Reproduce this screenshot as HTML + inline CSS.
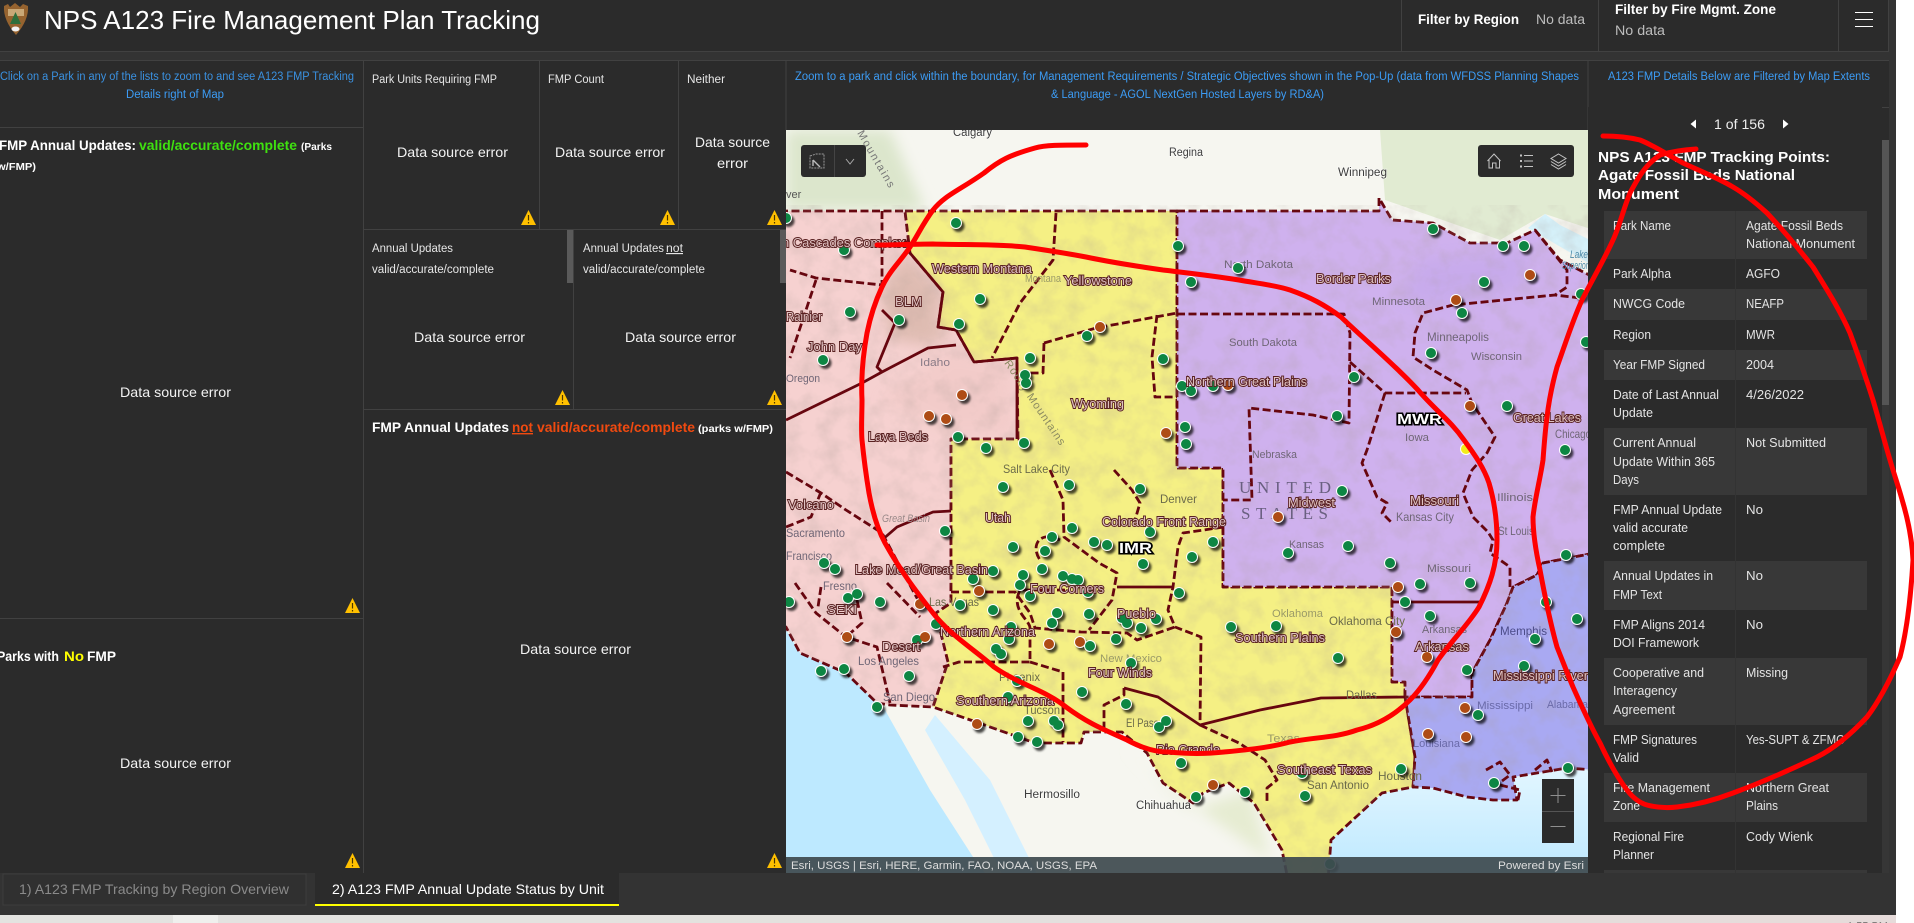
<!DOCTYPE html>
<html lang="en"><head><meta charset="utf-8"><title>NPS A123 Fire Management Plan Tracking</title>
<style>
html,body{margin:0;padding:0;background:#fff;width:1914px;height:923px;overflow:hidden}
svg{display:block}
text{font-family:"Liberation Sans",sans-serif}
.w{fill:#f2f2f2;font-size:14px}
.l{fill:#e6e6e6;font-size:11.5px}
.bl{fill:#3c9cf5;font-size:11.5px}
.t{fill:#e4e4e4;font-size:12.5px}
.h{fill:#fff;font-size:14px;font-weight:bold}
.r{font-size:13px;fill:#dfc2c2;stroke:#5a2222;stroke-width:1.9;paint-order:stroke}
.b{font-size:11px;fill:#6f6676}
.k{font-size:11.5px;fill:#3d3d3d;stroke:#fff;stroke-opacity:.5;stroke-width:1.5;paint-order:stroke}
.R{font-size:15px;font-weight:bold;fill:#fff;stroke:#000;stroke-width:3;paint-order:stroke}
</style></head><body>
<svg width="1914" height="923" viewBox="0 0 1914 923" xmlns="http://www.w3.org/2000/svg">
<defs>
<clipPath id="mc"><rect x="786" y="130" width="802" height="743"/></clipPath>
<clipPath id="land"><path d="M780 205H1595V770L1567 768L1513 777L1517 800L1433 788L1413 787L1382 793L1331 840L1328 880H1288L1282 850L1254 803L1229 783L1203 793L1193 803L1163 783L1147 753L1122 732H1084L1081 743H1035L979 723L933 707L877 703L846 673L800 653L786 627H780Z"/></clipPath>
<linearGradient id="gulf" x1="0" y1="0" x2="0" y2="1"><stop offset="0" stop-color="#e2f6ff"/><stop offset="1" stop-color="#bce8ff"/></linearGradient>
<linearGradient id="task" x1="0" y1="0" x2="1" y2="0"><stop offset="0" stop-color="#e3e3e0"/><stop offset=".5" stop-color="#e3e1de"/><stop offset="1" stop-color="#e6dbda"/></linearGradient>
<filter id="bl"><feGaussianBlur stdDeviation="1"/></filter>
<filter id="bl6" x="-30%" y="-30%" width="160%" height="160%"><feGaussianBlur stdDeviation="7"/></filter>
<filter id="ter" x="0" y="0" width="1" height="1"><feTurbulence type="fractalNoise" baseFrequency=".05" numOctaves="4" seed="7"/><feColorMatrix values="0 0 0 0 .4  0 0 0 0 .33  0 0 0 0 .3  .5 0 0 0 -.2"/></filter>
<g id="warn"><path d="M7.5 0 L15 15 H0 Z" fill="#ffc000"/><path d="M7.5 5v5.5M7.5 12v1.5" stroke="#4a3500" stroke-width="1.2"/></g>
<path id="dg" d="M956 223h.01M844 250h.01M1178 246h.01M786 218h.01M1238 268h.01M1191 282h.01M1433 229h.01M1503 246h.01M1524 246h.01M1484 282h.01M980 299h.01M850 312h.01M899 320h.01M959 324h.01M1087 336h.01M1462 313h.01M1431 353h.01M823 360h.01M1030 358h.01M1163 359h.01M1025 375h.01M1026 383h.01M1354 377h.01M1182 386h.01M1191 391h.01M1213 386h.01M1337 416h.01M1507 406h.01M1185 427h.01M958 437h.01M1024 443h.01M1186 444h.01M986 448h.01M1581 294h.01M1586 342h.01M1565 450h.01M1003 487h.01M1069 485h.01M1140 489h.01M1342 491h.01M945 531h.01M1072 528h.01M1150 532h.01M1052 537h.01M1094 542h.01M1107 545h.01M1013 547h.01M1045 551h.01M1213 542h.01M1192 557h.01M1288 553h.01M1348 546h.01M1566 555h.01M1143 564h.01M1390 563h.01M824 563h.01M835 569h.01M993 571h.01M1042 569h.01M973 579h.01M1023 575h.01M1063 576h.01M1072 579h.01M1078 580h.01M1020 585h.01M1420 584h.01M1470 583h.01M1179 593h.01M857 594h.01M848 598h.01M1030 596h.01M1088 592h.01M880 602h.01M789 602h.01M960 605h.01M1405 602h.01M1546 602h.01M993 610h.01M1057 613h.01M1089 614h.01M1122 618h.01M1127 623h.01M1156 619h.01M1430 616h.01M1052 623h.01M1577 619h.01M1231 627h.01M1276 626h.01M1141 628h.01M936 624h.01M1011 627h.01M1535 639h.01M1009 639h.01M1116 639h.01M1090 646h.01M917 640h.01M996 649h.01M1001 654h.01M1338 658h.01M1131 663h.01M844 669h.01M821 671h.01M1467 670h.01M1524 666h.01M909 676h.01M1017 681h.01M1082 692h.01M1008 697h.01M1126 704h.01M877 707h.01M1478 715h.01M1028 721h.01M1054 721h.01M1058 725h.01M1166 721h.01M1159 727h.01M1018 737h.01M1037 742h.01M1181 763h.01M1401 769h.01M1302 773h.01M1568 768h.01M1494 783h.01M1245 792h.01M1196 797h.01M1305 796h.01M1330 864h.01"/>
<path id="do" d="M1100 327h.01M1530 275h.01M1456 300h.01M962 395h.01M929 416h.01M946 419h.01M1166 433h.01M1228 385h.01M1470 406h.01M1278 517h.01M979 591h.01M1398 587h.01M920 604h.01M847 637h.01M1396 632h.01M925 637h.01M1049 644h.01M1080 642h.01M1427 657h.01M1465 708h.01M1428 734h.01M1466 737h.01M977 724h.01M1213 785h.01"/>
<path id="dy" d="M1466 449h.01"/>
</defs>
<rect width="1896" height="923" fill="#2b2b2b"/>
<rect y="51" width="1896" height="9" fill="#333"/>
<path d="M0 51.5H1889M0 60.5H1889" stroke="#414141"/>
<rect x="1889" width="7" height="915" fill="#333"/>
<rect y="873" width="1896" height="42" fill="#333"/>
<rect y="915" width="1896" height="8" fill="url(#task)"/>
<rect x="173" y="915" width="45" height="8" fill="#efefed"/>
<text x="1847" y="930" font-size="11" fill="#222">1:55 PM</text>

<!-- header -->
<path d="M4 6 L8 4 L10 7 L15 3 L20 7 L23 4 L28 6 Q29 20 16 35 Q3 20 4 6Z" fill="#96632f"/>
<path d="M8 9 H24 V16 H8Z" fill="#c9a877"/>
<path d="M15.5 12 L21 24 H10Z" fill="#2f6f3c"/>
<ellipse cx="15.5" cy="29" rx="4" ry="2.5" fill="#f2f2f2"/>
<text x="44" y="29" font-size="26" fill="#fff" textLength="496" lengthAdjust="spacingAndGlyphs">NPS A123 Fire Management Plan Tracking</text>
<path d="M1401.5 0V51M1598.5 0V51M1838.5 0V51M1888.5 0V51" stroke="#414141"/>
<text x="1418" y="24" class="h" font-size="13.5" textLength="101" lengthAdjust="spacingAndGlyphs">Filter by Region</text>
<text x="1536" y="24" font-size="13.5" fill="#bdbdbd" textLength="49" lengthAdjust="spacingAndGlyphs">No data</text>
<text x="1615" y="14" class="h" textLength="161" lengthAdjust="spacingAndGlyphs">Filter by Fire Mgmt. Zone</text>
<text x="1615" y="35" font-size="13.5" fill="#bdbdbd" textLength="50" lengthAdjust="spacingAndGlyphs">No data</text>
<path d="M1855 12.5H1873M1855 19.5H1873M1855 26.5H1873" stroke="#fff" stroke-width="1"/>

<!-- panel lines -->
<path d="M363.5 60V873M786 60V130M0 127.5H363M0 618.5H363M363 229.5H786M363 409.5H786M539.5 60V229M678.5 60V229M573.5 229V409M1588 60V130M1588 107.5H1889" stroke="#414141"/>

<!-- left -->
<text x="0" y="80" class="bl" fill-opacity=".9" textLength="354" lengthAdjust="spacingAndGlyphs">Click on a Park in any of the lists to zoom to and see A123 FMP Tracking</text>
<text x="126" y="98" class="bl" textLength="98" lengthAdjust="spacingAndGlyphs">Details right of Map</text>
<text x="-1" y="150" class="h" textLength="137" lengthAdjust="spacingAndGlyphs">FMP Annual Updates:</text>
<text x="139" y="150" font-size="14" font-weight="bold" fill="#3fe010" textLength="158" lengthAdjust="spacingAndGlyphs">valid/accurate/complete</text>
<text x="301" y="150" font-size="10.5" font-weight="bold" fill="#fff" textLength="31" lengthAdjust="spacingAndGlyphs">(Parks</text>
<text x="-3" y="170" font-size="10.5" font-weight="bold" fill="#fff" textLength="39" lengthAdjust="spacingAndGlyphs">w/FMP)</text>
<text x="120" y="397" class="w" textLength="111" lengthAdjust="spacingAndGlyphs">Data source error</text>
<use href="#warn" x="345" y="598"/>
<text x="-3" y="661" class="h" textLength="62" lengthAdjust="spacingAndGlyphs">Parks with</text>
<text x="64" y="661" font-size="14" font-weight="bold" fill="#ffff00" textLength="20" lengthAdjust="spacingAndGlyphs">No</text>
<text x="87" y="661" class="h" textLength="29" lengthAdjust="spacingAndGlyphs">FMP</text>
<text x="120" y="768" class="w" textLength="111" lengthAdjust="spacingAndGlyphs">Data source error</text>
<use href="#warn" x="345" y="853"/>

<!-- counts -->
<text x="372" y="83" class="l" textLength="125" lengthAdjust="spacingAndGlyphs">Park Units Requiring FMP</text>
<text x="548" y="83" class="l" textLength="56" lengthAdjust="spacingAndGlyphs">FMP Count</text>
<text x="687" y="83" class="l" textLength="38" lengthAdjust="spacingAndGlyphs">Neither</text>
<text x="397" y="157" class="w" textLength="111" lengthAdjust="spacingAndGlyphs">Data source error</text>
<text x="555" y="157" class="w" textLength="110" lengthAdjust="spacingAndGlyphs">Data source error</text>
<text x="695" y="147" class="w" textLength="75" lengthAdjust="spacingAndGlyphs">Data source</text>
<text x="717" y="168" class="w" textLength="31" lengthAdjust="spacingAndGlyphs">error</text>
<use href="#warn" x="521" y="210"/><use href="#warn" x="660" y="210"/><use href="#warn" x="767" y="210"/>

<text x="372" y="252" class="l" textLength="81" lengthAdjust="spacingAndGlyphs">Annual Updates</text>
<text x="372" y="273" class="l" textLength="122" lengthAdjust="spacingAndGlyphs">valid/accurate/complete</text>
<text x="583" y="252" class="l" textLength="81" lengthAdjust="spacingAndGlyphs">Annual Updates</text>
<text x="666" y="252" class="l" text-decoration="underline" textLength="17" lengthAdjust="spacingAndGlyphs">not</text>
<text x="583" y="273" class="l" textLength="122" lengthAdjust="spacingAndGlyphs">valid/accurate/complete</text>
<rect x="567" y="230" width="6" height="53" fill="#5a5a5a"/><rect x="780" y="230" width="6" height="53" fill="#5a5a5a"/>
<text x="414" y="342" class="w" textLength="111" lengthAdjust="spacingAndGlyphs">Data source error</text>
<text x="625" y="342" class="w" textLength="111" lengthAdjust="spacingAndGlyphs">Data source error</text>
<use href="#warn" x="555" y="390"/><use href="#warn" x="767" y="390"/>

<text x="372" y="432" class="h" textLength="137" lengthAdjust="spacingAndGlyphs">FMP Annual Updates</text>
<text x="512" y="432" font-size="14" font-weight="bold" fill="#f04a10" text-decoration="underline" textLength="21" lengthAdjust="spacingAndGlyphs">not</text>
<text x="537" y="432" font-size="14" font-weight="bold" fill="#f04a10" textLength="158" lengthAdjust="spacingAndGlyphs">valid/accurate/complete</text>
<text x="698" y="432" font-size="10.5" font-weight="bold" fill="#fff" textLength="75" lengthAdjust="spacingAndGlyphs">(parks w/FMP)</text>
<text x="520" y="654" class="w" textLength="111" lengthAdjust="spacingAndGlyphs">Data source error</text>
<use href="#warn" x="767" y="853"/>

<!-- map headers -->
<text x="795" y="80" class="bl" textLength="784" lengthAdjust="spacingAndGlyphs">Zoom to a park and click within the boundary, for Management Requirements / Strategic Objectives shown in the Pop-Up (data from WFDSS Planning Shapes</text>
<text x="1051" y="98" class="bl" textLength="273" lengthAdjust="spacingAndGlyphs">&amp; Language - AGOL NextGen Hosted Layers by RD&amp;A)</text>
<text x="1608" y="80" class="bl" textLength="262" lengthAdjust="spacingAndGlyphs">A123 FMP Details Below are Filtered by Map Extents</text>

<!-- MAP -->
<g clip-path="url(#mc)">
<rect x="786" y="130" width="802" height="743" fill="#f6f6f0"/>
<path d="M786 130H890L925 210H786Z" fill="#dce6cc" filter="url(#bl6)"/>
<path d="M1380 130H1600V232L1545 214L1500 240L1385 200Z" fill="#e1ebd2"/>
<path d="M1528 228L1545 214L1560 225L1590 240V264Z" fill="#d6f2fb"/>
<path d="M780 620L800 653L846 673L877 703L885 710L930 790L975 860L990 880H780Z" fill="#bde9ff"/>
<path d="M935 715L990 780L1040 880H1005L965 800L925 730Z" fill="#d4f0ff"/>
<path d="M1120 745L1200 810L1270 860L1250 790L1190 810L1150 770Z" fill="#e6ecd2" filter="url(#bl6)"/>
<path d="M1288 880H1328L1331 840L1382 793L1413 787L1433 788L1467 797L1517 800L1513 777L1567 768L1595 770V880Z" fill="url(#gulf)"/>
<g stroke="#67060f" stroke-width="2.8" stroke-linejoin="round">
<path d="M780 211H905L910 253L943 292L938 327L956 330L974 362L1017 358L1018 439H951V603L936 613L948 662L933 707L890 705L877 703L846 673L800 653L786 627H780Z" fill="#f6d1d0" stroke-dasharray="8 3.5"/>
<path d="M905 211H1177V468H1223V587H1392V682H1405V697L1415 757L1413 787L1382 793L1331 840L1328 880H1288L1282 850L1254 803L1229 783L1203 793L1193 803L1163 783L1147 753L1122 732H1084L1081 743H1035L979 723L933 707L948 662L936 613L951 603V439H1018L1017 358L974 362L956 330L938 327L943 292L910 253Z" fill="#f5f084" stroke-dasharray="8 3.5"/>
<path d="M1177 211H1379V198L1392 220L1433 223L1470 243L1507 243L1535 230L1560 260L1595 278V553L1543 563L1537 575L1513 587L1507 603L1490 640L1472 673V697H1405V682H1392V587H1223V468H1177Z" fill="#cfb1ee" stroke-dasharray="8 3.5"/>
<path d="M1595 553L1543 563L1537 575L1513 587L1507 603L1490 640L1472 673V697H1405L1415 757L1413 787L1433 788L1467 797L1493 800L1517 800L1513 777L1567 768L1595 770Z" fill="#a9a9f2" stroke-dasharray="8 3.5"/>
</g>
<path d="M1420 260L1530 250L1520 290L1440 305L1400 300Z" fill="#bda2e8" opacity=".4" filter="url(#bl6)"/>
<path d="M905 253L943 292L938 327L956 330L930 345L890 340L880 290Z" fill="#cfae9e" opacity=".6" filter="url(#bl6)"/>
<path d="M880 400L950 350L1010 360L1015 435H950Z" fill="#e8bdb8" opacity=".25" filter="url(#bl6)"/>
<g clip-path="url(#land)"><rect x="786" y="205" width="802" height="670" filter="url(#ter)"/></g>
<!-- boundaries -->
<g fill="none" stroke="#67060f" stroke-width="2.8" stroke-dasharray="8 3.5" stroke-linejoin="round">
<path d="M1056 213L1053 260L1020 303L992 358"/>
<path d="M882 211V285L816 278L790 270M816 280L790 358"/>
<path d="M1044 343L1096 328L1177 313M1157 315L1152 357L1155 397H1177M1044 343L1043 373H1030"/>
<path d="M1177 314H1344L1350 333L1349 423L1313 415L1249 408L1252 500H1223"/>
<path d="M1350 362L1385 393H1466M1385 393L1367 450L1362 463L1377 497L1387 503L1382 513L1392 523"/>
<path d="M1580 298L1555 295L1453 305L1423 313L1415 333L1413 357L1433 370L1467 390L1472 403L1495 437L1487 453L1472 470L1463 493L1473 517L1488 532L1493 540L1490 553L1510 567V587"/>
<path d="M1535 230L1567 270V287L1555 295"/>
<path d="M1050 470L1063 500L1064 537L1099 563L1117 573L1112 600L1089 630M1114 470L1132 490L1140 503L1135 520"/>
<path d="M1224 527L1183 533L1178 547L1173 587L1168 610L1175 627L1201 637L1200 725"/>
<path d="M951 592H1015L1030 613L1035 628L1081 632L1127 633L1137 640L1175 627"/>
<path d="M1030 628V662H959L943 667M1030 662L1063 672V742"/>
<path d="M1124 688V695L1104 705V730M1200 725L1239 743L1265 760L1277 780L1267 788V803"/>
<path d="M786 472L821 493L846 510L882 533L918 600L938 617M795 583L816 613L846 637L877 647L890 703M857 600L862 623L846 637M821 587L818 607M887 583L920 617M786 527L811 517L821 492"/>
<path d="M1060 540C1040 530 1030 545 1040 560"/>
<path d="M1065 590L1020 590C1010 610 1030 620 1030 628"/>
<path d="M1486 770L1500 762L1510 775L1490 790M1500 785L1520 790L1518 800M1535 770L1547 760L1552 772"/>
</g>
<g fill="none" stroke="#67060f" stroke-width="2.8" stroke-linejoin="round">
<path d="M905 240L910 253L943 292L938 327L956 330L974 362L1017 358V439"/>
<path d="M786 420L862 383L882 372L928 348L956 345"/>
<path d="M882 310L895 323L877 367L882 372"/>
<path d="M882 540L897 527L933 512L951 511"/>
<path d="M1124 688L1158 697L1200 725L1260 710L1321 698L1405 697"/>
<path d="M1117 587H1173M1392 602H1480"/>
</g>
<!-- basemap labels -->
<text class="k" x="953" y="136" textLength="39" lengthAdjust="spacingAndGlyphs">Calgary</text>
<text class="k" x="1169" y="156" textLength="34" lengthAdjust="spacingAndGlyphs">Regina</text>
<text class="k" x="1338" y="176" textLength="49" lengthAdjust="spacingAndGlyphs">Winnipeg</text>
<text class="k" x="1136" y="809" textLength="55" lengthAdjust="spacingAndGlyphs">Chihuahua</text>
<text class="k" x="1024" y="798" textLength="56" lengthAdjust="spacingAndGlyphs">Hermosillo</text>
<text class="b" x="1427" y="341" style="font-size:12px" textLength="62" lengthAdjust="spacingAndGlyphs">Minneapolis</text>
<text class="b" x="1471" y="360" textLength="51" lengthAdjust="spacingAndGlyphs">Wisconsin</text>
<text class="b" x="1372" y="305" textLength="53" lengthAdjust="spacingAndGlyphs">Minnesota</text>
<text class="b" x="1224" y="268" textLength="69" lengthAdjust="spacingAndGlyphs">North Dakota</text>
<text class="b" x="1229" y="346" textLength="68" lengthAdjust="spacingAndGlyphs">South Dakota</text>
<text class="b" x="1405" y="441" textLength="24" lengthAdjust="spacingAndGlyphs">Iowa</text>
<text class="b" x="920" y="366" fill-opacity=".8" textLength="30" lengthAdjust="spacingAndGlyphs">Idaho</text>
<text class="b" x="786" y="382" textLength="34" lengthAdjust="spacingAndGlyphs">Oregon</text>
<text class="b" x="1025" y="282" style="fill:#9a9a68" textLength="36" lengthAdjust="spacingAndGlyphs">Montana</text>
<text class="b" x="1252" y="458" textLength="45" lengthAdjust="spacingAndGlyphs">Nebraska</text>
<text x="1239" y="493" font-size="17" fill="#6a6080" textLength="92" lengthAdjust="spacing" style="font-family:'Liberation Serif',serif">UNITED</text>
<text x="1241" y="519" font-size="17" fill="#6a6080" textLength="87" lengthAdjust="spacing" style="font-family:'Liberation Serif',serif">STATES</text>
<text class="b" x="1160" y="503" style="fill:#6b6b4a;font-size:12px" textLength="37" lengthAdjust="spacingAndGlyphs">Denver</text>
<text class="b" x="1396" y="521" style="font-size:12px" textLength="58" lengthAdjust="spacingAndGlyphs">Kansas City</text>
<text class="b" x="1498" y="535" style="font-size:12px" textLength="36" lengthAdjust="spacingAndGlyphs">St Louis</text>
<text class="b" x="1497" y="501" textLength="36" lengthAdjust="spacingAndGlyphs">Illinois</text>
<text class="b" x="1427" y="572" textLength="44" lengthAdjust="spacingAndGlyphs">Missouri</text>
<text class="b" x="1289" y="548" textLength="35" lengthAdjust="spacingAndGlyphs">Kansas</text>
<text class="b" x="1272" y="617" style="fill:#9a9a68" textLength="51" lengthAdjust="spacingAndGlyphs">Oklahoma</text>
<text class="b" x="1329" y="625" style="fill:#6b6b4a;font-size:12px" textLength="76" lengthAdjust="spacingAndGlyphs">Oklahoma City</text>
<text class="b" x="1422" y="633" textLength="45" lengthAdjust="spacingAndGlyphs">Arkansas</text>
<text class="b" x="1500" y="635" style="fill:#4c4c88;font-size:12px" textLength="47" lengthAdjust="spacingAndGlyphs">Memphis</text>
<text class="b" x="1477" y="709" style="fill:#6a6aa8" textLength="56" lengthAdjust="spacingAndGlyphs">Mississippi</text>
<text class="b" x="1547" y="708" style="fill:#6a6aa8" textLength="41" lengthAdjust="spacingAndGlyphs">Alabama</text>
<text class="b" x="1413" y="747" style="fill:#6a6aa8" textLength="47" lengthAdjust="spacingAndGlyphs">Louisiana</text>
<text class="b" x="929" y="606" style="fill:#6b6b4a;font-size:12px" textLength="50" lengthAdjust="spacingAndGlyphs">Las Vegas</text>
<text class="b" x="1003" y="473" style="fill:#6b6b4a;font-size:12px" textLength="67" lengthAdjust="spacingAndGlyphs">Salt Lake City</text>
<text class="b" x="858" y="665" style="font-size:12px" textLength="61" lengthAdjust="spacingAndGlyphs">Los Angeles</text>
<text class="b" x="883" y="701" style="font-size:12px" textLength="52" lengthAdjust="spacingAndGlyphs">San Diego</text>
<text class="b" x="999" y="681" style="fill:#6b6b4a;font-size:12px" textLength="41" lengthAdjust="spacingAndGlyphs">Phoenix</text>
<text class="b" x="1024" y="714" style="fill:#6b6b4a;font-size:12px" textLength="36" lengthAdjust="spacingAndGlyphs">Tucson</text>
<text class="b" x="1126" y="727" style="fill:#6b6b4a;font-size:12px" textLength="33" lengthAdjust="spacingAndGlyphs">El Paso</text>
<text class="b" x="1267" y="742" style="fill:#9a9a68" textLength="33" lengthAdjust="spacingAndGlyphs">Texas</text>
<text class="b" x="1346" y="699" style="fill:#6b6b4a;font-size:12px" textLength="31" lengthAdjust="spacingAndGlyphs">Dallas</text>
<text class="b" x="1307" y="789" style="fill:#6b6b4a;font-size:12px" textLength="62" lengthAdjust="spacingAndGlyphs">San Antonio</text>
<text class="b" x="1378" y="780" style="fill:#6b6b4a;font-size:12px" textLength="44" lengthAdjust="spacingAndGlyphs">Houston</text>
<text class="b" x="1100" y="662" style="fill:#9a9a68" textLength="62" lengthAdjust="spacingAndGlyphs">New Mexico</text>
<text class="b" x="786" y="537" style="font-size:12px" textLength="59" lengthAdjust="spacingAndGlyphs">Sacramento</text>
<text class="b" x="786" y="560" style="font-size:12px" textLength="46" lengthAdjust="spacingAndGlyphs">Francisco</text>
<text class="b" x="823" y="590" style="font-size:12px" textLength="34" lengthAdjust="spacingAndGlyphs">Fresno</text>
<text class="b" x="1555" y="438" style="font-size:12px" textLength="36" lengthAdjust="spacingAndGlyphs">Chicago</text>
<text class="b" x="1570" y="258" style="fill:#4d8aa8;font-style:italic" textLength="18" lengthAdjust="spacingAndGlyphs">Lake</text>
<text class="b" x="1562" y="269" style="fill:#4d8aa8;font-style:italic" textLength="26" lengthAdjust="spacingAndGlyphs">Superior</text>
<text class="b" x="786" y="198" style="fill:#555">ver</text>
<text class="b" x="1004" y="363" transform="rotate(56 1004 363)" style="fill:#8a8a60" textLength="100" lengthAdjust="spacing">Rocky Mountains</text>
<text class="b" x="857" y="133" transform="rotate(60 857 133)" style="fill:#777" textLength="64" lengthAdjust="spacing">Mountains</text>
<text class="b" x="882" y="522" style="fill:#9a8a8a;font-style:italic" textLength="48" lengthAdjust="spacingAndGlyphs">Great Basin</text>
<!-- dots -->
<g fill="none" stroke-linecap="round">
<use href="#dg" stroke="#000" stroke-opacity=".7" stroke-width="12" filter="url(#bl)" transform="translate(2.5 3)"/>
<use href="#do" stroke="#000" stroke-opacity=".7" stroke-width="12" filter="url(#bl)" transform="translate(2.5 3)"/>
<use href="#dy" stroke="#000" stroke-opacity=".7" stroke-width="12" filter="url(#bl)" transform="translate(2.5 3)"/>
<use href="#dg" stroke="#fff" stroke-width="12"/><use href="#do" stroke="#fff" stroke-width="12"/><use href="#dy" stroke="#fff" stroke-width="12"/>
<use href="#dg" stroke="#0d8643" stroke-width="10"/>
<use href="#do" stroke="#ae4c15" stroke-width="10"/>
<use href="#dy" stroke="#f2ec1a" stroke-width="10"/>
</g>
<!-- region labels -->
<text class="r" x="782" y="247" textLength="123" lengthAdjust="spacingAndGlyphs">n Cascades Complex</text>
<text class="r" x="932" y="273" textLength="100" lengthAdjust="spacingAndGlyphs">Western Montana</text>
<text class="r" x="1064" y="285" textLength="68" lengthAdjust="spacingAndGlyphs">Yellowstone</text>
<text class="r" x="895" y="306" textLength="27" lengthAdjust="spacingAndGlyphs">BLM</text>
<text class="r" x="1316" y="283" textLength="75" lengthAdjust="spacingAndGlyphs">Border Parks</text>
<text class="r" x="1186" y="386" textLength="121" lengthAdjust="spacingAndGlyphs">Northern Great Plains</text>
<text class="r" x="1071" y="408" textLength="53" lengthAdjust="spacingAndGlyphs">Wyoming</text>
<text class="r" x="868" y="441" textLength="60" lengthAdjust="spacingAndGlyphs">Lava Beds</text>
<text class="r" x="807" y="351" textLength="55" lengthAdjust="spacingAndGlyphs">John Day</text>
<text class="r" x="786" y="321" textLength="36" lengthAdjust="spacingAndGlyphs">Rainier</text>
<text class="r" x="1513" y="422" textLength="68" lengthAdjust="spacingAndGlyphs">Great Lakes</text>
<text class="r" x="788" y="509" textLength="46" lengthAdjust="spacingAndGlyphs">Volcano</text>
<text class="r" x="985" y="522" textLength="26" lengthAdjust="spacingAndGlyphs">Utah</text>
<text class="r" x="1288" y="507" textLength="47" lengthAdjust="spacingAndGlyphs">Midwest</text>
<text class="r" x="1410" y="505" textLength="49" lengthAdjust="spacingAndGlyphs">Missouri</text>
<text class="r" x="1102" y="526" textLength="124" lengthAdjust="spacingAndGlyphs">Colorado Front Range</text>
<text class="r" x="855" y="574" textLength="133" lengthAdjust="spacingAndGlyphs">Lake Mead/Great Basin</text>
<text class="r" x="1030" y="593" textLength="74" lengthAdjust="spacingAndGlyphs">Four Corners</text>
<text class="r" x="827" y="614" textLength="30" lengthAdjust="spacingAndGlyphs">SEKI</text>
<text class="r" x="1117" y="618" textLength="39" lengthAdjust="spacingAndGlyphs">Pueblo</text>
<text class="r" x="940" y="636" textLength="95" lengthAdjust="spacingAndGlyphs">Northern Arizona</text>
<text class="r" x="1235" y="642" textLength="90" lengthAdjust="spacingAndGlyphs">Southern Plains</text>
<text class="r" x="882" y="651" textLength="38" lengthAdjust="spacingAndGlyphs">Desert</text>
<text class="r" x="1415" y="651" textLength="54" lengthAdjust="spacingAndGlyphs">Arkansas</text>
<text class="r" x="1088" y="677" textLength="64" lengthAdjust="spacingAndGlyphs">Four Winds</text>
<text class="r" x="1493" y="680" textLength="95" lengthAdjust="spacingAndGlyphs">Mississippi River</text>
<text class="r" x="956" y="705" textLength="98" lengthAdjust="spacingAndGlyphs">Southern Arizona</text>
<text class="r" x="1156" y="754" textLength="64" lengthAdjust="spacingAndGlyphs">Rio Grande</text>
<text class="r" x="1277" y="774" textLength="95" lengthAdjust="spacingAndGlyphs">Southeast Texas</text>
<text class="R" x="1397" y="424" textLength="45" lengthAdjust="spacingAndGlyphs">MWR</text>
<text class="R" x="1119" y="553" textLength="33" lengthAdjust="spacingAndGlyphs">IMR</text>
<!-- attribution -->
<rect x="786" y="857" width="802" height="16" fill="#3e4a50" fill-opacity=".93"/>
<text x="791" y="869" font-size="11" fill="#ddd" textLength="306" lengthAdjust="spacingAndGlyphs">Esri, USGS | Esri, HERE, Garmin, FAO, NOAA, USGS, EPA</text>
<text x="1498" y="869" font-size="11" fill="#ddd" textLength="86" lengthAdjust="spacingAndGlyphs">Powered by Esri</text>
<!-- widgets -->
<rect x="801" y="145" width="65" height="32" rx="3" fill="#2b2b2b"/>
<path d="M834.5 145V177" stroke="#444"/>
<path d="M810 156L816 154H824V168H810Z" fill="none" stroke="#9a9a9a" stroke-dasharray="2 1"/>
<path d="M813 160L820 167M813 160V166" stroke="#bbb" stroke-width="1.4" fill="none"/>
<path d="M846 159L850 164L854 159" fill="none" stroke="#aaa"/>
<rect x="1478" y="145" width="96" height="32" rx="3" fill="#2b2b2b"/>
<path d="M1487.5 161L1494 154L1500.5 161M1489 160V168H1492.5V163H1496V168H1499.5V160" fill="none" stroke="#c4c4c4"/>
<path d="M1524 155.5H1533M1524 161H1533M1524 166.5H1533" stroke="#c4c4c4"/>
<path d="M1520 155.5h2M1520 161h2M1520 166.5h2" stroke="#c4c4c4" stroke-width="2"/>
<path d="M1558.5 154L1566 158.5L1558.5 163L1551 158.5Z" fill="none" stroke="#c4c4c4"/>
<path d="M1551 161.5L1558.5 166L1566 161.5M1551 164.5L1558.5 169L1566 164.5" fill="none" stroke="#c4c4c4"/>
<rect x="1542" y="779" width="32" height="64" fill="#2b2b2b"/>
<path d="M1542 811.5H1574" stroke="#555"/>
<path d="M1558 788V803M1550.5 795.5H1565.5M1550.5 826.5H1565.5" stroke="#8f8f8f"/>
</g>

<!-- right panel -->
<rect x="1588" y="107" width="294" height="766" fill="#2b2b2b"/>
<rect x="1882" y="140" width="7" height="733" fill="#363636"/>
<rect x="1882" y="140" width="7" height="265" fill="#555"/>
<path d="M1696 119.500V128.500L1690.500 124Z" fill="#fff"/><path d="M1783 119.500V128.500L1788.500 124Z" fill="#fff"/>
<text x="1714" y="129" font-size="13.500" fill="#eee" textLength="51" lengthAdjust="spacingAndGlyphs">1 of 156</text>
<text x="1598" y="162" font-size="14.500" font-weight="bold" fill="#fff" textLength="232" lengthAdjust="spacingAndGlyphs">NPS A123 FMP Tracking Points:</text>
<text x="1598" y="180" font-size="14.500" font-weight="bold" fill="#fff" textLength="197" lengthAdjust="spacingAndGlyphs">Agate Fossil Beds National</text>
<text x="1598" y="199" font-size="14.500" font-weight="bold" fill="#fff" textLength="81" lengthAdjust="spacingAndGlyphs">Monument</text>
<g fill="#383838">
<rect x="1604" y="211" width="263" height="48"/>
<rect x="1604" y="289" width="263" height="31"/>
<rect x="1604" y="350" width="263" height="30"/>
<rect x="1604" y="428" width="263" height="67"/>
<rect x="1604" y="561" width="263" height="49"/>
<rect x="1604" y="658" width="263" height="67"/>
<rect x="1604" y="773" width="263" height="49"/>
<rect x="1604" y="870" width="263" height="3"/>
</g>
<path d="M1735.500 211V873" stroke="#333"/>
<text class="t" x="1613" y="230" textLength="58" lengthAdjust="spacingAndGlyphs">Park Name</text>
<text class="t" x="1746" y="230" textLength="97" lengthAdjust="spacingAndGlyphs">Agate Fossil Beds</text>
<text class="t" x="1746" y="248" textLength="109" lengthAdjust="spacingAndGlyphs">National Monument</text>
<text class="t" x="1613" y="278" textLength="58" lengthAdjust="spacingAndGlyphs">Park Alpha</text>
<text class="t" x="1746" y="278" textLength="34" lengthAdjust="spacingAndGlyphs">AGFO</text>
<text class="t" x="1613" y="308" textLength="72" lengthAdjust="spacingAndGlyphs">NWCG Code</text>
<text class="t" x="1746" y="308" textLength="38" lengthAdjust="spacingAndGlyphs">NEAFP</text>
<text class="t" x="1613" y="339" textLength="38" lengthAdjust="spacingAndGlyphs">Region</text>
<text class="t" x="1746" y="339" textLength="29" lengthAdjust="spacingAndGlyphs">MWR</text>
<text class="t" x="1613" y="369" textLength="92" lengthAdjust="spacingAndGlyphs">Year FMP Signed</text>
<text class="t" x="1746" y="369" textLength="28" lengthAdjust="spacingAndGlyphs">2004</text>
<text class="t" x="1613" y="399" textLength="106" lengthAdjust="spacingAndGlyphs">Date of Last Annual</text>
<text class="t" x="1613" y="417" textLength="40" lengthAdjust="spacingAndGlyphs">Update</text>
<text class="t" x="1746" y="399" textLength="58" lengthAdjust="spacingAndGlyphs">4/26/2022</text>
<text class="t" x="1613" y="447" textLength="83" lengthAdjust="spacingAndGlyphs">Current Annual</text>
<text class="t" x="1613" y="466" textLength="102" lengthAdjust="spacingAndGlyphs">Update Within 365</text>
<text class="t" x="1613" y="484" textLength="26" lengthAdjust="spacingAndGlyphs">Days</text>
<text class="t" x="1746" y="447" textLength="80" lengthAdjust="spacingAndGlyphs">Not Submitted</text>
<text class="t" x="1613" y="514" textLength="109" lengthAdjust="spacingAndGlyphs">FMP Annual Update</text>
<text class="t" x="1613" y="532" textLength="75" lengthAdjust="spacingAndGlyphs">valid accurate</text>
<text class="t" x="1613" y="550" textLength="52" lengthAdjust="spacingAndGlyphs">complete</text>
<text class="t" x="1746" y="514" textLength="17" lengthAdjust="spacingAndGlyphs">No</text>
<text class="t" x="1613" y="580" textLength="100" lengthAdjust="spacingAndGlyphs">Annual Updates in</text>
<text class="t" x="1613" y="599" textLength="49" lengthAdjust="spacingAndGlyphs">FMP Text</text>
<text class="t" x="1746" y="580" textLength="17" lengthAdjust="spacingAndGlyphs">No</text>
<text class="t" x="1613" y="629" textLength="92" lengthAdjust="spacingAndGlyphs">FMP Aligns 2014</text>
<text class="t" x="1613" y="647" textLength="86" lengthAdjust="spacingAndGlyphs">DOI Framework</text>
<text class="t" x="1746" y="629" textLength="17" lengthAdjust="spacingAndGlyphs">No</text>
<text class="t" x="1613" y="677" textLength="91" lengthAdjust="spacingAndGlyphs">Cooperative and</text>
<text class="t" x="1613" y="695" textLength="64" lengthAdjust="spacingAndGlyphs">Interagency</text>
<text class="t" x="1613" y="714" textLength="62" lengthAdjust="spacingAndGlyphs">Agreement</text>
<text class="t" x="1746" y="677" textLength="42" lengthAdjust="spacingAndGlyphs">Missing</text>
<text class="t" x="1613" y="744" textLength="84" lengthAdjust="spacingAndGlyphs">FMP Signatures</text>
<text class="t" x="1613" y="762" textLength="26" lengthAdjust="spacingAndGlyphs">Valid</text>
<text class="t" x="1746" y="744" textLength="99" lengthAdjust="spacingAndGlyphs">Yes-SUPT &amp; ZFMO</text>
<text class="t" x="1613" y="792" textLength="97" lengthAdjust="spacingAndGlyphs">Fire Management</text>
<text class="t" x="1613" y="810" textLength="27" lengthAdjust="spacingAndGlyphs">Zone</text>
<text class="t" x="1746" y="792" textLength="83" lengthAdjust="spacingAndGlyphs">Northern Great</text>
<text class="t" x="1746" y="810" textLength="32" lengthAdjust="spacingAndGlyphs">Plains</text>
<text class="t" x="1613" y="841" textLength="71" lengthAdjust="spacingAndGlyphs">Regional Fire</text>
<text class="t" x="1613" y="859" textLength="41" lengthAdjust="spacingAndGlyphs">Planner</text>
<text class="t" x="1746" y="841" textLength="67" lengthAdjust="spacingAndGlyphs">Cody Wienk</text>

<!-- tabs -->
<rect x="3" y="874" width="303" height="31" fill="#303030" stroke="#3d3d3d"/>
<text x="19" y="894" font-size="14" fill="#8a8a8a" textLength="270" lengthAdjust="spacingAndGlyphs">1) A123 FMP Tracking by Region Overview</text>
<rect x="315" y="873" width="304" height="33" fill="#2b2b2b"/>
<rect x="315" y="904" width="304" height="2" fill="#ffff00"/>
<text x="332" y="894" font-size="14" fill="#fff" textLength="272" lengthAdjust="spacingAndGlyphs">2) A123 FMP Annual Update Status by Unit</text>

<!-- red scribbles -->
<g fill="none" stroke="#ff0000" stroke-width="5" stroke-linecap="round" stroke-linejoin="round">
<path d="M1086 145C1060 145 1045 145 1035 148C1010 155 1000 160 984 173C960 190 945 195 933 210C922 225 918 235 910 247C900 262 890 270 882 287C875 302 870 318 867 333C863 355 861 380 862 400C862 415 861 428 862 440C864 460 866 475 869 493C873 515 878 530 885 543C900 570 915 590 933 613C950 635 975 650 994 667C1020 685 1045 690 1066 707C1090 725 1110 732 1127 740C1140 747 1155 752 1168 752C1190 754 1205 754 1224 752C1245 750 1268 748 1290 742C1315 737 1335 738 1357 730C1378 725 1395 715 1410 700C1420 690 1430 675 1438 660C1452 640 1468 625 1479 607C1490 585 1497 565 1497 540C1497 520 1494 500 1489 483C1484 468 1475 455 1464 440C1450 420 1435 410 1418 390C1395 365 1365 340 1341 317C1325 305 1310 297 1290 290C1275 285 1255 283 1239 280C1215 276 1188 273 1163 270C1135 266 1110 262 1086 257C1065 253 1045 250 1025 247C995 244 965 245 933 244C915 244 895 245 877 245"/>
<path d="M1696 149C1680 150 1670 152 1660 155C1645 165 1638 178 1630 193C1623 210 1620 225 1613 240C1603 262 1592 280 1582 300C1572 322 1565 345 1557 367C1552 385 1549 400 1547 417C1545 432 1544 447 1543 460C1540 480 1535 498 1533 517C1533 535 1536 552 1540 570C1545 597 1550 622 1557 647C1563 662 1568 675 1573 687C1582 707 1590 725 1600 743C1608 760 1617 777 1627 790C1633 798 1640 803 1647 805C1658 808 1668 808 1677 807C1695 805 1715 800 1733 793C1760 783 1790 770 1817 757C1835 748 1852 733 1867 717C1880 700 1890 680 1900 657C1907 630 1911 595 1913 560C1912 540 1908 520 1903 503C1899 488 1894 474 1890 460C1884 440 1879 420 1873 400C1866 378 1858 355 1850 333C1840 310 1826 288 1813 267C1798 248 1783 230 1767 213C1756 203 1745 194 1733 187C1718 178 1700 171 1683 163C1668 155 1655 146 1640 140C1628 137 1615 136 1603 136"/>
</g>
</svg>
</body></html>
